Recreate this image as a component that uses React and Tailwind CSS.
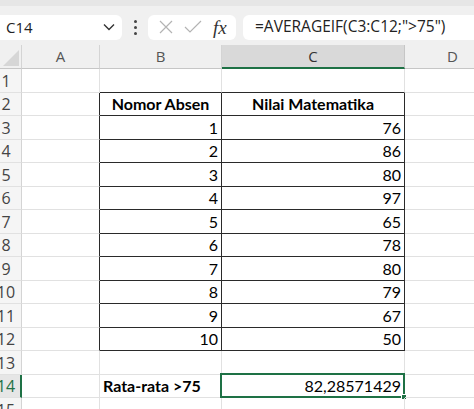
const COLS = [
  { key: "A", w: "w-[78px]" },
  { key: "B", w: "w-[122px]" },
  { key: "C", w: "w-[183px]" },
  { key: "D", w: "w-[96px]" },
];

const HEIGHTS = ["h-[24px]", "h-[23px]"];

const values = [76, 86, 80, 97, 65, 78, 80, 79, 67, 50];

function cellContent(row, col) {
  if (row === 2 && col === "B") return { text: "Nomor Absen", bold: true, align: "center" };
  if (row === 2 && col === "C") return { text: "Nilai Matematika", bold: true, align: "center" };
  if (row >= 3 && row <= 12 && col === "B") return { text: String(row - 2), align: "right" };
  if (row >= 3 && row <= 12 && col === "C") return { text: String(values[row - 3]), align: "right" };
  if (row === 14 && col === "B") return { text: "Rata-rata >75", bold: true, align: "left" };
  if (row === 14 && col === "C") return { text: "82,28571429", align: "right" };
  return null;
}

function Cell({ row, col, w }) {
  const rightDark = row >= 2 && row <= 12 && (col === "A" || col === "B" || col === "C");
  const bottomDark = row >= 1 && row <= 12 && (col === "B" || col === "C");
  const c = cellContent(row, col);
  const selected = row === 14 && col === "C";
  return (
    <div
      className={`relative shrink-0 ${w} h-full border-r border-b ${
        rightDark ? "border-r-[#2a2a2a]" : "border-r-[#e1e1e1]"
      } ${bottomDark ? "border-b-[#2a2a2a]" : "border-b-[#e1e1e1]"} flex items-end pb-[3px] ${
        c && c.align === "right" ? "justify-end pr-[3px]" : c && c.align === "center" ? "justify-center" : "justify-start pl-[3px]"
      }`}
    >
      {c && (
        <span className={`text-[16px] leading-none text-black whitespace-nowrap ${c.bold ? "font-bold" : ""}`}>
          {c.text}
        </span>
      )}
      {selected && (
        <div className="absolute -left-[2px] -top-[2px] -right-[1px] -bottom-[1px] border-2 border-[#1e7145] pointer-events-none">
          <div className="absolute -right-[4px] -bottom-[4px] w-[6px] h-[6px] bg-[#1e7145] border border-white" />
        </div>
      )}
    </div>
  );
}

function RowHeader({ row }) {
  const active = row === 14;
  return (
    <div
      className={`shrink-0 w-[22px] h-full overflow-hidden flex items-center justify-start border-b border-b-[#e1e1e1] ${
        active
          ? "bg-[#e6e6e6] border-r-2 border-r-[#1e7145] text-[#1e7145]"
          : "bg-[#f5f5f5] border-r border-r-[#d4d4d4] text-[#444]"
      }`}
    >
      <div className="w-[12px] shrink-0 flex justify-center">
        <span className="text-[16px] leading-none whitespace-nowrap" style={{ fontFamily: "'Open Sans', sans-serif" }}>
          {row}
        </span>
      </div>
    </div>
  );
}

function FormulaBar() {
  return (
    <div className="h-[45px] bg-[#f0f0f0] flex items-center gap-0 pt-[3px] border-t-[6px] border-t-[#e6e6e6]">
      <div className="w-[122px] h-[25px] bg-white rounded-r-[6px] flex items-center justify-between pl-[6px] pr-[7px] shrink-0">
        <span className="text-[15px] text-[#222]">C14</span>
        <svg width="12" height="8" viewBox="0 0 12 8" fill="none" stroke="#333" strokeWidth="1.4">
          <path d="M1 1.5 L6 6.5 L11 1.5" />
        </svg>
      </div>
      <div className="w-[26px] flex flex-col items-center gap-[3px] shrink-0">
        <span className="w-[3px] h-[3px] rounded-full bg-[#444]" />
        <span className="w-[3px] h-[3px] rounded-full bg-[#444]" />
        <span className="w-[3px] h-[3px] rounded-full bg-[#444]" />
      </div>
      <div className="w-[88px] h-[25px] bg-white rounded-[6px] flex items-center shrink-0 pl-[6px]">
        <svg width="16" height="16" viewBox="0 0 16 16" stroke="#b3b3b3" strokeWidth="1.2" className="ml-[4px]">
          <path d="M2 2 L14 14 M14 2 L2 14" />
        </svg>
        <svg width="18" height="14" viewBox="0 0 18 14" fill="none" stroke="#b3b3b3" strokeWidth="1.2" className="ml-[10px]">
          <path d="M1 7 L6 12 L17 1" />
        </svg>
        <span
          className="ml-[11px] text-[19px] italic text-[#333] leading-none"
          style={{ fontFamily: "'Liberation Serif', serif" }}
        >
          fx
        </span>
      </div>
      <div className="flex-1 ml-[7px] h-[25px] bg-white rounded-l-[6px] flex items-center pl-[12px]">
        <span className="text-[15.5px] text-[#222] whitespace-nowrap">=AVERAGEIF(C3:C12;"&gt;75")</span>
      </div>
    </div>
  );
}

export default function App() {
  const rows = Array.from({ length: 15 }, (_, i) => i + 1);
  return (
    <div
      className="w-[474px] h-[409px] overflow-hidden bg-white"
      style={{ fontFamily: "'Open Sans', 'Noto Sans', sans-serif" }}
    >
      <FormulaBar />
      <div className="flex h-[24px] bg-[#f0f0f0]">
        <div className="relative shrink-0 w-[22px] h-full border-r border-r-[#d4d4d4] border-b border-b-[#c6c6c6]">
          <svg className="absolute right-[2px] bottom-[2px]" width="16" height="16" viewBox="0 0 16 16">
            <path d="M16 0 L16 16 L0 16 Z" fill="#d6d6d6" />
          </svg>
        </div>
        {COLS.map((c) => (
          <div
            key={c.key}
            className={`shrink-0 ${c.w} h-full flex items-center justify-center text-[15px] ${
              c.key === "C"
                ? "bg-[#d9d9d9] border-b-2 border-b-[#1e7145] text-[#333] border-r border-r-[#c6c6c6]"
                : "text-[#555] border-b border-b-[#c6c6c6] border-r border-r-[#d4d4d4]"
            }`}
          >
            {c.key}
          </div>
        ))}
      </div>
      <div style={{ fontFamily: "Lato, 'Liberation Sans', sans-serif" }}>
        {rows.map((r) => (
          <div key={r} className={`flex ${HEIGHTS[(r - 1) % 2]}`}>
            <RowHeader row={r} />
            {COLS.map((c) => (
              <Cell key={c.key} row={r} col={c.key} w={c.w} />
            ))}
          </div>
        ))}
      </div>
    </div>
  );
}
